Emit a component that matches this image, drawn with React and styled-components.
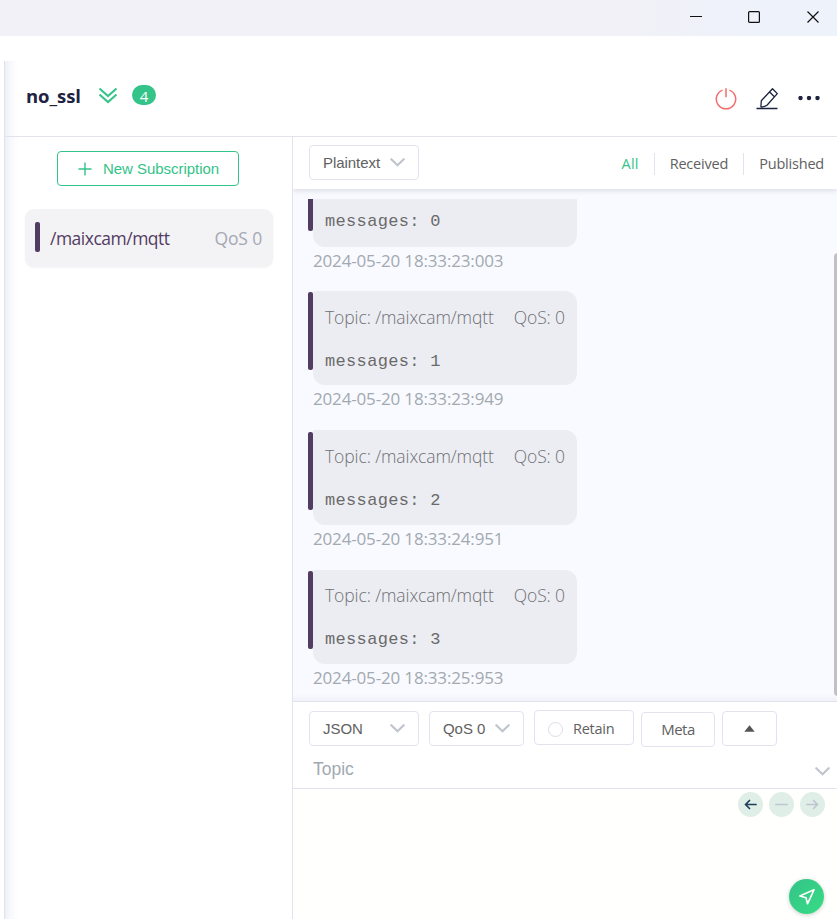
import React from 'react';
import styled, { createGlobalStyle, css } from 'styled-components';

const GlobalStyle = createGlobalStyle`
  * {
    box-sizing: border-box;
  }

  body {
    margin: 0;
    overflow: hidden;
    background-color: #fff;
    font-family: 'Open Sans', 'Noto Sans', sans-serif;
    color: #616161;
  }

  svg {
    display: block;
    flex-shrink: 0;
  }
`;

const border = '#e3e3f0';
const green = '#34c388';
const sans = "'Liberation Sans', Arial, sans-serif";

const Window = styled.div`
  display: flex;
  flex-direction: column;
  width: 837px;
  height: 919px;
  overflow: hidden;
`;

const TitleBar = styled.div`
  display: flex;
  justify-content: flex-end;
  height: 36px;
  flex-shrink: 0;
  padding: 10px 17px 0 0;
  gap: 45px;
  background: linear-gradient(to right, #f2f1f7 0%, #f1f1f7 75%, #eef2fb 92%);
`;

const Client = styled.div`
  display: flex;
  flex-direction: column;
  flex: 1;
  min-height: 0;
  margin: 25px 0 0 4px;
  border-left: 1px solid #dee2ef;
  background: linear-gradient(to right, #edf0f6 0, #f7f8fb 5px, #fff 13px);
`;

const Header = styled.div`
  display: flex;
  align-items: center;
  height: 76px;
  flex-shrink: 0;
  padding: 0 16px 6px 21px;
  border-bottom: 1px solid ${border};
`;

const ConnectionName = styled.h1`
  margin: 0;
  width: 72px;
  font-size: 18.5px;
  line-height: 24px;
  font-weight: 700;
  letter-spacing: -0.05px;
  color: #1d2340;
`;

const Badge = styled.span`
  width: 24px;
  height: 20px;
  margin: -2px 0 0 14px;
  border-radius: 10px;
  background-color: ${green};
  font-size: 15px;
  line-height: 22px;
  text-align: center;
  color: #fff;
`;

const HeaderActions = styled.div`
  display: flex;
  align-items: center;
  gap: 19px;
  margin-left: auto;
  padding-top: 6px;
`;

const Columns = styled.div`
  display: flex;
  flex: 1;
  min-height: 0;
`;

const Sidebar = styled.div`
  display: flex;
  flex-direction: column;
  width: 288px;
  flex-shrink: 0;
  padding: 14px 19px 0 20px;
  border-right: 1px solid ${border};
`;

const NewSubscription = styled.div`
  display: flex;
  align-items: center;
  width: 182px;
  height: 35px;
  margin-left: 32px;
  padding-left: 20px;
  gap: 11px;
  border: 1px solid ${green};
  border-radius: 4px;
  font-family: ${sans};
  font-size: 15px;
  letter-spacing: -0.04px;
  white-space: nowrap;
  color: ${green};
`;

const Subscription = styled.div`
  display: flex;
  align-items: center;
  width: 248px;
  height: 58px;
  margin-top: 23px;
  padding: 0 11px 2px 10px;
  border-radius: 9px;
  background-color: #f3f3f6;
  box-shadow: 0 1px 2px rgba(0, 0, 0, 0.05);
  font-size: 17.5px;
  line-height: 24px;
  white-space: nowrap;
`;

const SubscriptionBar = styled.div`
  width: 5px;
  height: 30px;
  margin-right: 10px;
  border-radius: 2px;
  background-color: #533c62;
`;

const SubscriptionTopic = styled.span`
  padding-top: 2px;
  letter-spacing: -0.5px;
  color: #533c62;
`;

const SubscriptionQos = styled.span`
  margin-left: auto;
  padding-top: 2px;
  letter-spacing: -0.15px;
  color: #a5a9b3;
`;

const Main = styled.div`
  display: flex;
  flex-direction: column;
  flex: 1;
  min-width: 0;
`;

const FilterBar = styled.div`
  display: flex;
  align-items: flex-start;
  position: relative;
  z-index: 1;
  height: 52px;
  flex-shrink: 0;
  padding: 8px 13px 0 16px;
  background-color: #fff;
  box-shadow: 0 1px 6px rgba(70, 70, 90, 0.2);
  clip-path: inset(0 0 -10px 0);
`;

const Box = styled.div`
  display: flex;
  align-items: center;
  width: ${props => props.$width}px;
  height: 35px;
  border: 1px solid ${border};
  border-radius: 4px;
  background-color: #fff;
  font-size: 15px;
  white-space: nowrap;
`;

const Select = styled(Box)`
  justify-content: space-between;
  padding: 0 13px;
  font-family: ${sans};
  letter-spacing: -0.05px;
`;

const QosSelect = styled(Select)`
  margin-left: 10px;
`;

const Filters = styled.div`
  display: flex;
  align-items: center;
  margin: 8px 0 0 auto;
`;

const Filter = styled.span`
  font-size: 14.5px;
  line-height: 22px;
  letter-spacing: ${props => props.$tracking || 0}px;
  color: ${props => (props.$active ? green : '#616161')};

  & + & {
    margin-left: 15px;
    padding-left: 15px;
    border-left: 1px solid ${border};
  }
`;

const MessageArea = styled.div`
  position: relative;
  flex: 1;
  min-height: 0;
  padding: 10px 0 0 15px;
  background: linear-gradient(to top, #f1f2f7 0, #f9faff 7px);
`;

const MessageList = styled.div`
  height: 100%;
  overflow: hidden;
`;

const Bubble = styled.div`
  width: 264px;
  height: 94.3px;
  padding: 13.5px 12px 0;
  border-radius: 2px 12px 12px 12px;
  background-color: #ecedf2;
`;

const MessageMeta = styled.div`
  display: flex;
  justify-content: space-between;
  margin-bottom: 22px;
  font-size: 17.5px;
  font-weight: 300;
  line-height: 25px;
  white-space: nowrap;
  color: #6f7074;
`;

const MetaText = styled.span`
  letter-spacing: ${props => props.$tracking}px;
`;

const Payload = styled.pre`
  margin: 0;
  font-family: 'Liberation Mono', 'Courier New', monospace;
  font-size: 17px;
  line-height: 20px;
  letter-spacing: 0.33px;
  color: #6a6a6a;
`;

const MessageBar = styled.div`
  width: 5px;
  height: 78px;
  margin-top: 1.3px;
  border-radius: 2px;
  background-color: #533c62;
`;

// the topmost message is scrolled halfway out of the list
const Message = styled.div`
  display: flex;
  align-items: flex-start;
  height: 139.3px;

  ${props => props.$cut && css`
    height: 92.2px;

    ${Bubble} {
      height: 47.5px;
      padding-top: 13px;
      border-radius: 0 0 12px 12px;
    }

    ${MessageBar} {
      height: 32px;
      margin-top: 0;
      border-radius: 0 0 2px 2px;
    }
  `}
`;

const Time = styled.div`
  font-size: 17px;
  line-height: 27px;
  letter-spacing: -0.16px;
  white-space: nowrap;
  color: #a2a9b0;
`;

const Scrollbar = styled.div`
  position: absolute;
  top: 64px;
  right: -5px;
  width: 8px;
  height: 443px;
  border-radius: 4px;
  background-color: #c1c1c3;
`;

const Publish = styled.div`
  display: flex;
  flex-direction: column;
  height: 218px;
  flex-shrink: 0;
  border-top: 1px solid ${border};
`;

const PublishOptions = styled.div`
  display: flex;
  align-items: flex-start;
  height: 50px;
  padding: 9px 0 0 16px;
`;

const Retain = styled(Box)`
  margin: -1px 7px 0 10px;
  padding: 2px 0 0 13px;
  gap: 10px;
  font-size: 14.5px;
  letter-spacing: -0.25px;
`;

const Radio = styled.span`
  width: 15px;
  height: 15px;
  margin-top: 1px;
  border: 1px solid #dcdde8;
  border-radius: 50%;
`;

const CenterBox = styled(Box)`
  justify-content: center;
  ${props => props.$lowered && css`
    margin: 1px 7px 0 0;
    padding-bottom: 2px;
    letter-spacing: -0.5px;
  `}
`;

const TopicRow = styled.div`
  display: flex;
  align-items: center;
  justify-content: space-between;
  height: 37px;
  padding: 0 7px 2px 20px;
  border-bottom: 1px solid ${border};
  font-family: ${sans};
  font-size: 17.5px;
  color: #a2a9b0;

  svg {
    margin-top: 4px;
  }
`;

const Editor = styled.div`
  display: flex;
  flex-direction: column;
  align-items: flex-end;
  justify-content: space-between;
  flex: 1;
  padding: 3px 12px 5px 0;
  background-color: #fffffd;
`;

const History = styled.div`
  display: flex;
  gap: 6px;
`;

const RoundButton = styled.div`
  display: flex;
  align-items: center;
  justify-content: center;
  width: 25px;
  height: 25px;
  border-radius: 50%;
  background-color: #dfeee7;
  color: ${props => (props.$disabled ? '#bfc5ce' : '#1f3d5c')};
`;

const SendButton = styled.div`
  display: flex;
  align-items: center;
  justify-content: center;
  width: 35px;
  height: 35px;
  margin-right: 1px;
  border-radius: 50%;
  background: linear-gradient(135deg, #34c388, #37dc85);
  box-shadow: 0 1px 4px rgba(0, 0, 0, 0.2);
`;

const Chevron = () => (
  <svg width="15" height="9" viewBox="0 0 15 9" fill="none" stroke="#c0c4cc" strokeWidth="2.2" strokeLinecap="round">
    <path d="M1.3 1.2 7.5 7.3 13.7 1.2" />
  </svg>
);

const RoundIcon = ({ d }) => (
  <svg width="13" height="11" viewBox="0 0 13 11" fill="none" stroke="currentColor" strokeWidth="1.7" strokeLinecap="round" strokeLinejoin="round">
    <path d={d} />
  </svg>
);

const messages = [
  { payload: 'messages: 0', time: '2024-05-20 18:33:23:003' },
  { payload: 'messages: 1', time: '2024-05-20 18:33:23:949' },
  { payload: 'messages: 2', time: '2024-05-20 18:33:24:951' },
  { payload: 'messages: 3', time: '2024-05-20 18:33:25:953' },
];

const MessageItem = ({ message, cut }) => (
  <Message $cut={cut}>
    <MessageBar />
    <div>
      <Bubble>
        {!cut && (
          <MessageMeta>
            <MetaText $tracking={-0.1}>Topic: /maixcam/mqtt</MetaText>
            <MetaText $tracking={-0.1}>QoS: 0</MetaText>
          </MessageMeta>
        )}
        <Payload>{message.payload}</Payload>
      </Bubble>
      <Time>{message.time}</Time>
    </div>
  </Message>
);

const App = () => (
  <Window>
    <GlobalStyle />
    <TitleBar>
      <svg width="14" height="14" viewBox="0 0 14 14" stroke="#111" strokeWidth="1">
        <path d="M2 6.5h12" />
      </svg>
      <svg width="14" height="14" viewBox="0 0 14 14" fill="none" stroke="#111" strokeWidth="1.2">
        <rect x="1.6" y="1.6" width="10.8" height="10.8" rx="1" />
      </svg>
      <svg width="14" height="14" viewBox="0 0 14 14" stroke="#111" strokeWidth="1.2">
        <path d="M1.5 1.5l11 11M12.5 1.5l-11 11" />
      </svg>
    </TitleBar>
    <Client>
      <Header>
        <ConnectionName>no_ssl</ConnectionName>
        <svg width="20" height="18" viewBox="0 0 20 18" fill="none" stroke={green} strokeWidth="2">
          <path d="M1.5 1.5 10 9.1 18.5 1.5M1.5 7.5 10 15.1 18.5 7.5" />
        </svg>
        <Badge>4</Badge>
        <HeaderActions>
          <svg width="22" height="22" viewBox="0 0 22 22" fill="none" stroke="#f56c6c" strokeWidth="1.5">
            <path d="M11 0.300v9M7.500 2.100a9.700 9.700 0 1 0 7 0" />
          </svg>
          <svg width="22" height="22" viewBox="0 0 22 22" fill="none" stroke="#1d2340" strokeWidth="1.3" strokeLinejoin="round">
            <path d="M0.500 20.500h21M16.500 0.700 21.300 5.600 11 17.300Q8.500 19 4.900 18.800L5.300 12.700zM13.600 4l4.800 4.800" />
          </svg>
          <svg width="24" height="6" viewBox="0 0 24 6" fill="#1d2340">
            <circle cx="3.500" cy="2" r="2.200" />
            <circle cx="12" cy="2" r="2.200" />
            <circle cx="20.500" cy="2" r="2.200" />
          </svg>
        </HeaderActions>
      </Header>
      <Columns>
        <Sidebar>
          <NewSubscription>
            <svg width="14" height="14" viewBox="0 0 14 14" stroke={green} strokeWidth="1.4">
              <path d="M7 0.500v13M0.500 7h13" />
            </svg>
            New Subscription
          </NewSubscription>
          <Subscription>
            <SubscriptionBar />
            <SubscriptionTopic>/maixcam/mqtt</SubscriptionTopic>
            <SubscriptionQos>QoS 0</SubscriptionQos>
          </Subscription>
        </Sidebar>
        <Main>
          <FilterBar>
            <Select $width={110}>Plaintext<Chevron /></Select>
            <Filters>
              <Filter $active $tracking={0.2}>All</Filter>
              <Filter $tracking={-0.2}>Received</Filter>
              <Filter $tracking={-0.2}>Published</Filter>
            </Filters>
          </FilterBar>
          <MessageArea>
            <MessageList>
              {messages.map((message, index) => (
                <MessageItem key={message.time} message={message} cut={index === 0} />
              ))}
            </MessageList>
            <Scrollbar />
          </MessageArea>
          <Publish>
            <PublishOptions>
              <Select $width={110}>JSON<Chevron /></Select>
              <QosSelect $width={95}>QoS 0<Chevron /></QosSelect>
              <Retain $width={100}><Radio />Retain</Retain>
              <CenterBox $width={74} $lowered>Meta</CenterBox>
              <CenterBox $width={55}>
                <svg width="11" height="7" viewBox="0 0 11 7" fill="#555">
                  <path d="M5.500 0.300 10.700 6.700H0.300z" />
                </svg>
              </CenterBox>
            </PublishOptions>
            <TopicRow>Topic<Chevron /></TopicRow>
            <Editor>
              <History>
                <RoundButton><RoundIcon d="M12 5.500H1.500M5.500 1.500l-4 4 4 4" /></RoundButton>
                <RoundButton $disabled><RoundIcon d="M0.900 5.500h11.200" /></RoundButton>
                <RoundButton $disabled><RoundIcon d="M1 5.500h10.500M7.500 1.500l4 4-4 4" /></RoundButton>
              </History>
              <SendButton>
                <svg width="18" height="18" viewBox="0 0 18 18" fill="none" stroke="#fff" strokeWidth="1.6" strokeLinejoin="round">
                  <path d="M16 1.800 1.800 8 8 9.800 9.500 15.800z" />
                </svg>
              </SendButton>
            </Editor>
          </Publish>
        </Main>
      </Columns>
    </Client>
  </Window>
);

export default App;
